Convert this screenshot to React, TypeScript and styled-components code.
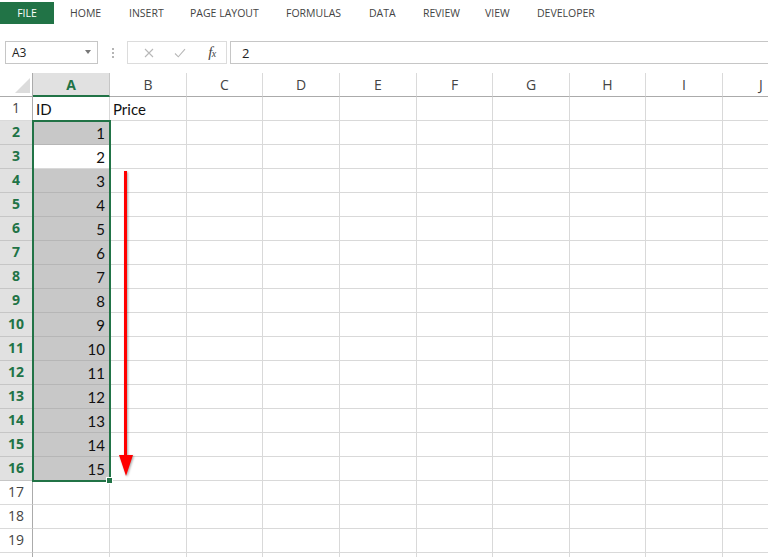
import React from "react";
import styled, { createGlobalStyle } from "styled-components";

const GREEN = "#217346";
const GRID = "#d9d9d9";
const HEAD_LINE = "#ababab";

const Global = createGlobalStyle`
  html, body { margin: 0; padding: 0; background: #fff; }
  body { overflow: hidden; }
`;

const Page = styled.div`
  position: relative;
  width: 768px;
  height: 557px;
  overflow: hidden;
  background: #fff;
  font-family: "Open Sans", "Noto Sans", sans-serif;
`;

const TabBar = styled.div`
  display: flex;
  align-items: flex-start;
  height: 27px;
  padding-top: 2px;
  box-sizing: border-box;
`;

const FileTab = styled.div`
  width: 54px;
  height: 22px;
  background: ${GREEN};
  color: #fff;
  font-size: 10.5px;
  display: flex;
  align-items: center;
  justify-content: center;
  margin-right: 16px;
`;

const Tab = styled.div<{ $w?: number }>`
  width: ${(p) => (p.$w ? `${p.$w}px` : "auto")};
  flex: none;
  height: 22px;
  line-height: 22px;
  font-size: 10.5px;
  color: #444;
  white-space: nowrap;
`;

const FormulaRow = styled.div`
  display: flex;
  height: 23px;
  margin-top: 14px;
  align-items: stretch;
`;

const NameBox = styled.div`
  margin-left: 5px;
  width: 93px;
  box-sizing: border-box;
  border: 1px solid #c6c6c6;
  display: flex;
  align-items: center;
  justify-content: space-between;
  padding: 0 6px 0 6px;
  font-size: 12px;
  color: #222;
`;

const Caret = styled.span`
  width: 0;
  height: 0;
  border-left: 3.5px solid transparent;
  border-right: 3.5px solid transparent;
  border-top: 4px solid #777;
  margin-top: -1px;
`;

const Dots = styled.div`
  width: 29px;
  display: flex;
  flex-direction: column;
  align-items: center;
  justify-content: center;
  gap: 2px;
  & > span {
    width: 2px;
    height: 2px;
    background: #b5b5b5;
  }
`;

const ButtonBox = styled.div`
  width: 100px;
  box-sizing: border-box;
  border: 1px solid #dcdcdc;
  display: flex;
  align-items: center;
  padding-left: 10px;
`;

const FxButton = styled.span<{ $w: number }>`
  width: ${(p) => p.$w}px;
  display: flex;
  align-items: center;
  justify-content: center;
`;

const FxText = styled.span`
  font-family: "Liberation Serif", "DejaVu Serif", serif;
  font-style: italic;
  font-size: 15px;
  color: #444;
  letter-spacing: -0.5px;
`;

const FxSub = styled.span`
  font-size: 10px;
`;

const InputBox = styled.div`
  flex: 1;
  margin-left: 3px;
  margin-right: -2px;
  box-sizing: border-box;
  border: 1px solid #c6c6c6;
  display: flex;
  align-items: center;
  padding-left: 11px;
  font-size: 13px;
  color: #222;
`;

const Grid = styled.div`
  position: relative;
  margin-top: 9px;
  display: grid;
  grid-template-columns: 33px 77px 77px 76px 77px 77px 76px 77px 76px 77px 77px;
  grid-auto-rows: 24px;
`;

const Corner = styled.div`
  position: relative;
  box-sizing: border-box;
  border-right: 1px solid ${HEAD_LINE};
  border-bottom: 1px solid ${HEAD_LINE};
  &::after {
    content: "";
    position: absolute;
    right: 2px;
    bottom: 3px;
    width: 0;
    height: 0;
    border-left: 15px solid transparent;
    border-bottom: 15px solid #dcdcdc;
  }
`;

const ColHeader = styled.div<{ $sel?: boolean }>`
  box-sizing: border-box;
  background: ${(p) => (p.$sel ? "#e1e1e1" : "#fff")};
  border-right: 1px solid ${(p) => (p.$sel ? "#c6c6c6" : "#dadada")};
  border-bottom: ${(p) => (p.$sel ? `2px solid ${GREEN}` : `1px solid ${HEAD_LINE}`)};
  text-align: center;
  font-size: 14px;
  line-height: 23px;
  color: ${(p) => (p.$sel ? GREEN : "#444")};
  font-weight: ${(p) => (p.$sel ? 700 : 400)};
`;

const RowHeader = styled.div<{ $sel?: boolean }>`
  box-sizing: border-box;
  background: ${(p) => (p.$sel ? "#e1e1e1" : "#fff")};
  border-right: 1px solid ${HEAD_LINE};
  border-bottom: 1px solid ${(p) => (p.$sel ? "#c6c6c6" : "#dadada")};
  text-align: center;
  font-size: 14px;
  line-height: 22px;
  color: ${(p) => (p.$sel ? GREEN : "#444")};
  font-weight: ${(p) => (p.$sel ? 700 : 400)};
`;

const Cell = styled.div<{ $fill?: "gray" | "white"; $right?: boolean }>`
  box-sizing: border-box;
  background: ${(p) => (p.$fill === "gray" ? "#c8c8c8" : "#fff")};
  border-right: 1px solid ${GRID};
  border-bottom: 1px solid ${(p) => (p.$fill === "gray" ? "#b6b6b6" : GRID)};
  font-family: "Lato", "Open Sans", sans-serif;
  font-size: 15px;
  line-height: 24px;
  color: #111;
  padding: 0 4px 0 3px;
  text-align: ${(p) => (p.$right ? "right" : "left")};
  white-space: nowrap;
  overflow: hidden;
`;

const SelectionOutline = styled.div`
  position: absolute;
  left: 32px;
  top: 47px;
  width: 79px;
  height: 362px;
  box-sizing: border-box;
  border: 2px solid ${GREEN};
  pointer-events: none;
`;

const FillHandle = styled.div`
  position: absolute;
  left: 106px;
  top: 404px;
  width: 5px;
  height: 5px;
  background: ${GREEN};
  border: 1px solid #fff;
`;

const Arrow = styled.svg`
  position: absolute;
  left: 114px;
  top: 166px;
  overflow: visible;
  filter: drop-shadow(1px 1px 1.2px rgba(0, 0, 0, 0.35));
  pointer-events: none;
`;

const COLS = ["A", "B", "C", "D", "E", "F", "G", "H", "I", "J"];
const TABS: { label: string; w?: number }[] = [
  { label: "HOME", w: 59 },
  { label: "INSERT", w: 61 },
  { label: "PAGE LAYOUT", w: 96 },
  { label: "FORMULAS", w: 83 },
  { label: "DATA", w: 54 },
  { label: "REVIEW", w: 62 },
  { label: "VIEW", w: 52 },
  { label: "DEVELOPER" },
];

export default function App() {
  const rows = Array.from({ length: 20 }, (_, i) => i + 1);
  return (
    <Page>
      <Global />
      <TabBar>
        <FileTab>FILE</FileTab>
        {TABS.map((t) => (
          <Tab key={t.label} $w={t.w}>
            {t.label}
          </Tab>
        ))}
      </TabBar>
      <FormulaRow>
        <NameBox>
          <span>A3</span>
          <Caret />
        </NameBox>
        <Dots>
          <span />
          <span />
          <span />
        </Dots>
        <ButtonBox>
          <FxButton $w={22}>
            <svg width="10" height="10" viewBox="0 0 10 10">
              <path d="M1 1 L9 9 M9 1 L1 9" stroke="#b8b8b8" strokeWidth="1.1" fill="none" />
            </svg>
          </FxButton>
          <FxButton $w={40}>
            <svg width="12" height="10" viewBox="0 0 12 10">
              <path d="M1 5.5 L4.3 8.8 L11 1.2" stroke="#b8b8b8" strokeWidth="1.1" fill="none" />
            </svg>
          </FxButton>
          <FxButton $w={24}>
            <FxText>
              f<FxSub>x</FxSub>
            </FxText>
          </FxButton>
        </ButtonBox>
        <InputBox>2</InputBox>
      </FormulaRow>
      <Grid>
        <Corner />
        {COLS.map((c) => (
          <ColHeader key={c} $sel={c === "A"}>
            {c}
          </ColHeader>
        ))}
        {rows.map((r) => {
          const sel = r >= 2 && r <= 16;
          return (
            <React.Fragment key={r}>
              <RowHeader $sel={sel}>{r < 20 ? r : null}</RowHeader>
              {COLS.map((c) => {
                let text: React.ReactNode = null;
                let right = false;
                let fill: "gray" | "white" | undefined;
                if (c === "A") {
                  if (r === 1) text = "ID";
                  else if (sel) {
                    text = r - 1;
                    right = true;
                    fill = r === 3 ? "white" : "gray";
                  }
                }
                if (c === "B" && r === 1) text = "Price";
                return (
                  <Cell key={c} $fill={fill} $right={right}>
                    {text}
                  </Cell>
                );
              })}
            </React.Fragment>
          );
        })}
        <SelectionOutline />
        <FillHandle />
      </Grid>
      <Arrow width="24" height="312" viewBox="0 0 24 312">
        <line x1="11.5" y1="5" x2="11.5" y2="292" stroke="#ff0000" strokeWidth="3" />
        <polygon points="5,289 19,289 12,310" fill="#ff0000" />
      </Arrow>
    </Page>
  );
}
